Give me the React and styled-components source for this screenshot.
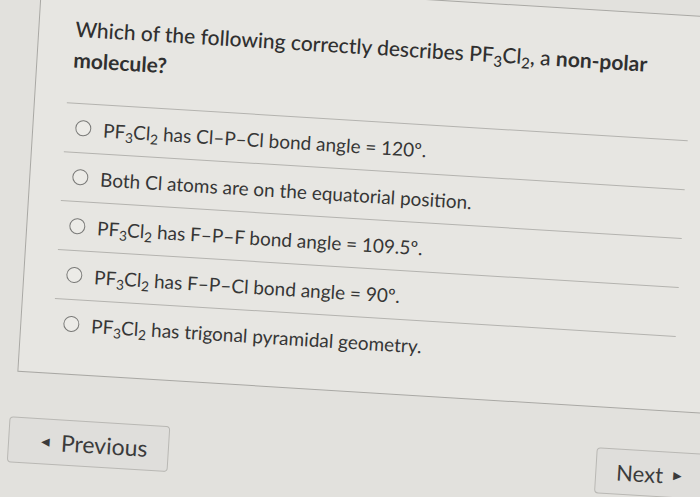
import React from "react"
import styled, { createGlobalStyle } from "styled-components"

const GlobalStyle = createGlobalStyle`
  html, body {
    margin: 0;
    padding: 0;
    width: 700px;
    height: 497px;
    overflow: hidden;
    background: #e2e1dd;
    font-family: Lato, "Noto Sans", sans-serif;
    color: #363636;
  }
`

// the photo was taken at a slight angle, so the whole page is tilted
const Page = styled.div`
  width: 760px;
  transform-origin: 0 0;
  transform: rotate(3.5deg) translateY(-27px);
`

const Card = styled.div`
  margin-left: 40px;
  height: 397px;
  box-sizing: border-box;
  border: 1px solid #a9a8a4;
  background: #e7e6e2;
  padding: 34px 0 0 36px;
`

const Question = styled.div`
  font-size: 21px;
  line-height: 31px;
  font-weight: 500;
  color: #303030;
  width: 620px;
  margin-bottom: 28px;

  strong {
    font-weight: 700;
  }
`

const Sub = styled.sub`
  font-size: 0.72em;
  line-height: 0;
  vertical-align: -0.28em;
`

const Answers = styled.ul`
  list-style: none;
  margin: 0 0 0 -4px;
  padding: 0;
  width: 622px;
`

const Answer = styled.li`
  display: flex;
  align-items: center;
  gap: 12px;
  height: 49px;
  box-sizing: border-box;
  border-top: 1px solid #b4b3af;
  padding-left: 10px;
  font-size: 19px;
  color: #363636;
`

const Radio = styled.span`
  width: 16px;
  height: 16px;
  box-sizing: border-box;
  border-radius: 50%;
  border: 1.5px solid #7a7a78;
  background: #ecebe7;
  flex: none;
`

const Footer = styled.div`
  display: flex;
  justify-content: space-between;
  align-items: flex-start;
  margin-top: 45px;
  padding-left: 35px;
  width: 698px;
`

const NavButton = styled.button`
  display: flex;
  align-items: center;
  gap: ${p => (p.next ? "10px" : "12px")};
  height: 46px;
  box-sizing: border-box;
  padding-left: ${p => (p.next ? "20px" : "32px")};
  padding-right: 0;
  width: ${p => (p.next ? "110px" : "161px")};
  justify-content: flex-start;
  margin-top: ${p => (p.next ? "-5px" : "0")};
  border: 1px solid #b9b8b4;
  border-radius: 4px;
  background: #dfdedb;
  font-family: Lato, "Noto Sans", sans-serif;
  font-size: ${p => (p.next ? "22px" : "23px")};
  color: #3b3b3b;
`

const Arrow = styled.span`
  font-size: 11px;
  color: #3b3b3b;
`

const answers = [
  <>PF<Sub>3</Sub>Cl<Sub>2</Sub> has Cl–P–Cl bond angle = 120º.</>,
  <>Both Cl atoms are on the equatorial position.</>,
  <>PF<Sub>3</Sub>Cl<Sub>2</Sub> has F–P–F bond angle = 109.5º.</>,
  <>PF<Sub>3</Sub>Cl<Sub>2</Sub> has F–P–Cl bond angle = 90º.</>,
  <>PF<Sub>3</Sub>Cl<Sub>2</Sub> has trigonal pyramidal geometry.</>,
]

export default function App() {
  return (
    <>
      <GlobalStyle />
      <Page>
        <Card>
          <Question>
            Which of the following correctly describes PF<Sub>3</Sub>Cl<Sub>2</Sub>, a{" "}
            <strong>non-polar molecule?</strong>
          </Question>
          <Answers>
            {answers.map((a, i) => (
              <Answer key={i}>
                <Radio />
                <span>{a}</span>
              </Answer>
            ))}
          </Answers>
        </Card>
        <Footer>
          <NavButton>
            <Arrow>◀</Arrow>
            Previous
          </NavButton>
          <NavButton next>
            Next
            <Arrow>▶</Arrow>
          </NavButton>
        </Footer>
      </Page>
    </>
  )
}
